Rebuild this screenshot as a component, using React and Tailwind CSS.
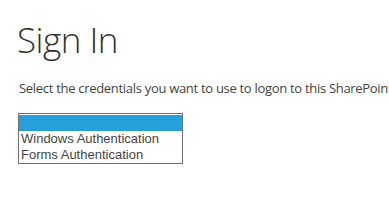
export default function App() {
  const options = ['', 'Windows Authentication', 'Forms Authentication']

  return (
    <div className="w-[389px] h-[204px] overflow-hidden bg-white text-[#444]">
      <div className="pl-[19px] pt-[19px]">
        <h1 className="text-[35px] leading-[42px] font-light text-[#333] font-['Open_Sans',sans-serif] -ml-[2px] tracking-[-0.5px]">
          Sign In
        </h1>
        <p className="mt-[19px] text-[13px] leading-[16px] whitespace-nowrap tracking-[-0.3px] font-['Open_Sans',sans-serif]">
          Select the credentials you want to use to logon to this SharePoint site:
        </p>
      </div>

      {/* credential list */}
      <div className="ml-[18px] mt-[17px] w-[165px] h-[51px] border border-[#707070] pt-px font-['Liberation_Sans',Arial,sans-serif] text-[13px] leading-[16px] text-[#444]">
        {options.map((o, i) => (
          <div
            key={i}
            className={i === 0 ? 'h-[16px] bg-[#26a0da] px-[2px]' : 'h-[16px] px-[2px]'}
          >
            {o}
          </div>
        ))}
      </div>
    </div>
  )
}
